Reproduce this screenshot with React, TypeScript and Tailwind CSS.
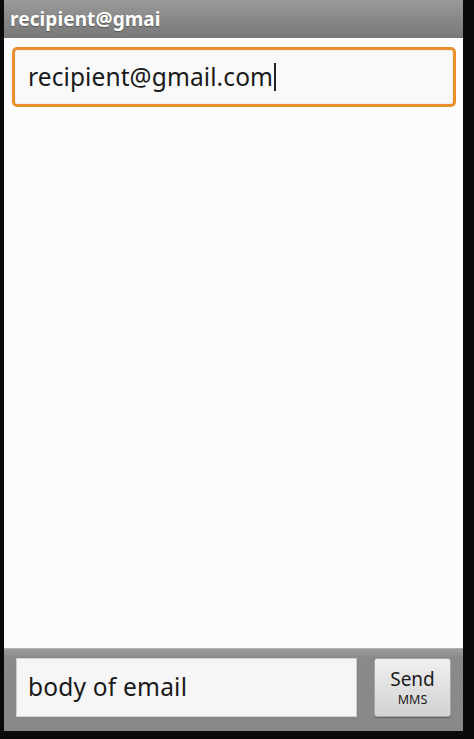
export default function App() {
  return (
    <div
      className="w-[474px] h-[739px] bg-[#0a0a0a] flex pl-[4px] pr-[11px] pb-[8px] overflow-hidden"
      style={{ fontFamily: '"Noto Sans", "Open Sans", sans-serif' }}
    >
      <div className="flex-1 flex flex-col">
        {/* title bar */}
        <div className="h-[38px] shrink-0 flex items-center pl-[6px] bg-[linear-gradient(180deg,#9a9a9a,#777777)]">
          <span className="text-white font-bold text-[19px] leading-none tracking-[0.1px] [text-shadow:0_1px_1px_rgba(0,0,0,.35)]">
            recipient@gmai
          </span>
        </div>

        {/* content */}
        <div className="flex-1 bg-[#fcfcfc] pt-[9px] pl-[8px] pr-[7px]">
          <div className="h-[60px] rounded-[5px] border-[3px] border-[#e98f2b] bg-[#f9f9f9] flex items-center pl-[13px] shadow-[inset_0_0_2px_rgba(0,0,0,.15)]">
            <span className="text-[24.5px] text-[#1a1a1a] leading-none tracking-[0.1px]">recipient@gmail.com</span>
            <span className="w-[1.5px] h-[28px] bg-[#222] ml-[1px]" />
          </div>
        </div>

        {/* bottom bar */}
        <div className="h-[83px] shrink-0 flex pt-[9px] pl-[12px] pr-[12px] bg-[linear-gradient(180deg,#9c9c9c,#8a8a8a_10%,#888888)] border-t border-[#b0b0b0]">
          <div className="w-[341px] h-[59px] bg-[#f6f6f6] border border-[#cfcfcf] flex items-center pl-[11px]">
            <span className="text-[24.5px] text-[#1a1a1a] leading-none tracking-[0.2px]">body of email</span>
          </div>
          <div className="ml-auto w-[77px] h-[59px] rounded-[3px] bg-[linear-gradient(180deg,#f0f0f0,#d2d2d2)] border border-[#a8a8a8] shadow-[0_1px_1px_rgba(0,0,0,.3)] flex flex-col items-center justify-center gap-[5px]">
            <span className="text-[19px] text-[#1a1a1a] leading-[19px]">Send</span>
            <span className="text-[12.5px] text-[#1a1a1a] leading-[12px]">MMS</span>
          </div>
        </div>
      </div>
    </div>
  )
}
